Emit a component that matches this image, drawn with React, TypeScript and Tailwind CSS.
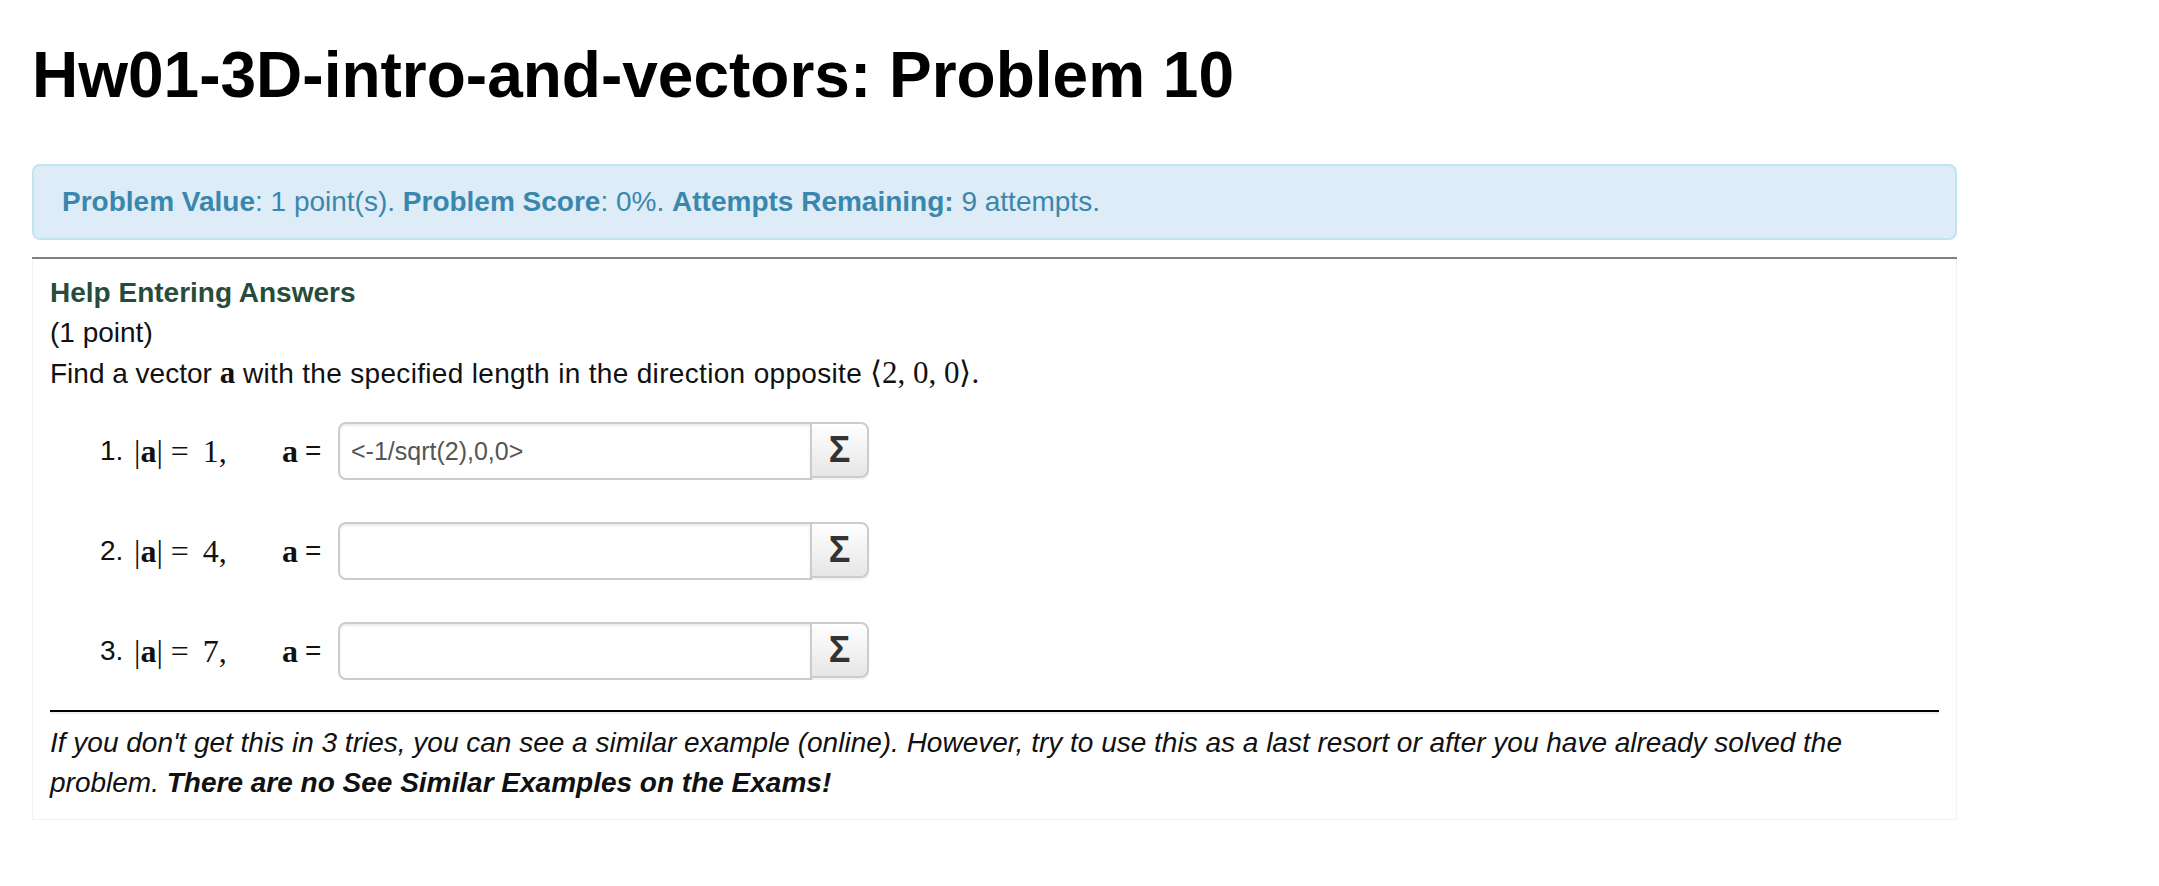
import React from "react";

const ROWS = [
  { n: "1.", len: "1", value: "<-1/sqrt(2),0,0>" },
  { n: "2.", len: "4", value: "" },
  { n: "3.", len: "7", value: "" },
];

export default function App() {
  return (
    <div className="min-h-screen bg-white text-[#111111] font-['Liberation_Sans',Arial,sans-serif] text-[28px]">
      <div className="pl-[32px] w-[1957px]">
        <h1 className="pt-[40px] text-[64px] leading-[70px] font-bold text-black">
          Hw01-3D-intro-and-vectors: Problem 10
        </h1>

        {/* Score info */}
        <div className="mt-[54px] h-[76px] border-2 border-[#bfe5f0] bg-[#deecf7] rounded-[8px] pl-[28px] flex items-center leading-[40px] text-[#3a87ad]">
          <p>
            <b>Problem Value</b>: 1 point(s). <b>Problem Score</b>: 0%.{" "}
            <b>Attempts Remaining:</b> 9 attempts.
          </p>
        </div>

        <div className="mt-[17px] h-[2px] bg-[#808080]" />

        {/* Problem body */}
        <div className="border border-t-0 border-[#f2f2f2] px-[17px] pt-[14px] pb-[16px] leading-[40px]">
          <div className="font-bold text-[#284c3c]">Help Entering Answers</div>
          <div>(1 point)</div>
          <div>
            Find a vector <span className="font-['Liberation_Serif',serif] font-bold text-[31px]">a</span>{" "}
            <span className="tracking-[0.33px]">with the specified length in the direction opposite</span>{" "}
            <span className="font-['Liberation_Serif',serif] text-[31px]">⟨2, 0, 0⟩.</span>
          </div>

          <div className="mt-[28px] flex flex-col gap-[42px]">
            {ROWS.map((r) => (
              <div key={r.n} className="flex items-center h-[58px] pl-[50px]">
                <span className="w-[34px]">{r.n}</span>
                <span className="w-[148px] flex items-center font-['Liberation_Serif',serif] text-[32px]">
                  <span>|</span>
                  <span className="font-bold">a</span>
                  <span>|</span>
                  <span className="ml-[8px]">=</span>
                  <span className="ml-[14px]">{r.len},</span>
                </span>
                <span className="w-[56px] flex items-center">
                  <span className="font-['Liberation_Serif',serif] font-bold text-[32px]">a</span>
                  <span className="ml-[7px]">=</span>
                </span>
                <div className="flex h-[58px]">
                  <div className="w-[474px] h-[58px] border-2 border-[#cccccc] rounded-l-[8px] bg-white shadow-[inset_0_2px_2px_rgba(0,0,0,0.075)] flex items-center pl-[11px] text-[25px] text-[#555555]">
                    {r.value}
                  </div>
                  <div className="w-[59px] h-[56px] -ml-[2px] border-2 border-[#cccccc] rounded-r-[8px] bg-gradient-to-b from-white to-[#e6e6e6] shadow-[0_2px_2px_rgba(0,0,0,0.06)] flex items-center justify-center text-[#333333] font-bold text-[36px] leading-none">
                    Σ
                  </div>
                </div>
              </div>
            ))}
          </div>

          <div className="mt-[30px] h-[2px] bg-black" />
          <div className="h-[2px] bg-[#eeeeee]" />

          <p className="mt-[9px] italic">
            If you don't get this in 3 tries, you can see a similar example (online). However, try to use this
            as a last resort or after you have already solved the problem.{" "}
            <b>There are no See Similar Examples on the Exams!</b>
          </p>
        </div>
      </div>
    </div>
  );
}
